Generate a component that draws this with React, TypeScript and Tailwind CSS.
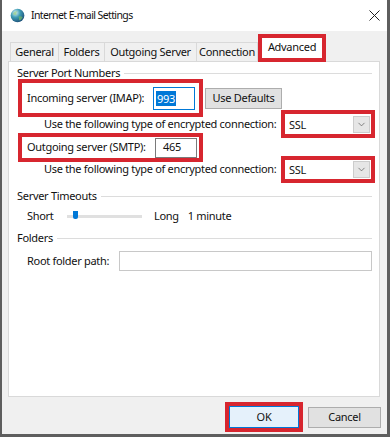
import { ChevronDown } from 'lucide-react'

const font = { fontFamily: '"Noto Sans", "Open Sans", sans-serif' }

function GroupHeader({ title, className }: { title: string; className?: string }) {
	return (
		<div className={`flex items-center h-[14px] pl-[8px] pr-[7px] ${className ?? ''}`}>
			<span className="leading-[14px] whitespace-nowrap">{title}</span>
			<div className="flex-1 h-px bg-[#dcdcdc] ml-[4px]" />
		</div>
	)
}

function SslSelect({ className }: { className?: string }) {
	return (
		<div className={`ml-auto mr-[4px] w-[94px] shrink-0 border-4 border-[#d7262f] ${className ?? ''}`}>
			<div className="flex items-center h-full bg-white pl-[4px] pr-[1px]">
				<span className="flex-1 leading-none">SSL</span>
				<div className="flex items-center justify-center w-[17px] h-[17px] bg-[#e6e6e6] border border-[#cccccc]">
					<ChevronDown className="w-[11px] h-[11px] text-[#555]" strokeWidth={1.5} />
				</div>
			</div>
		</div>
	)
}

function App() {
	return (
		<div
			className="w-[390px] h-[437px] bg-[#5e5e5e] overflow-hidden text-[11px] tracking-[-0.3px] text-[#111]"
			style={font}
		>
			<div className="ml-[2px] mr-[3px] h-[434px] bg-[#f0f0f0] flex flex-col">
				{/* title bar */}
				<div className="flex items-center h-[31px] bg-white">
					<svg className="ml-[8px] w-[15px] h-[15px]" viewBox="0 0 16 16">
						<defs>
							<radialGradient id="globe" cx="0.35" cy="0.3" r="0.75">
								<stop offset="0" stopColor="#d9f0f5" />
								<stop offset="0.45" stopColor="#3f9db5" />
								<stop offset="1" stopColor="#1d4f78" />
							</radialGradient>
						</defs>
						<circle cx="8" cy="8" r="7.3" fill="url(#globe)" />
						<path d="M3 6 Q5 3 8 3.5 Q6 5 7 7 Q5 8 3 6Z" fill="#9ccf8f" opacity="0.8" />
						<path d="M9 9 Q12 8 13.5 10 Q12 13 9.5 13 Q10 11 9 9Z" fill="#6cb26b" opacity="0.8" />
					</svg>
					<span className="ml-[6px] text-[10.5px] tracking-[-0.6px] whitespace-nowrap">Internet E-mail Settings</span>
					<svg className="ml-auto mr-[7px] w-[11px] h-[11px]" viewBox="0 0 11 11">
						<path d="M0.5 0.5 L10.5 10.5 M10.5 0.5 L0.5 10.5" stroke="#222" strokeWidth="1" />
					</svg>
				</div>

				{/* tabs */}
				<div className="flex items-end h-[30px] pl-[8px] whitespace-nowrap">
					<div className="w-[49px] h-[19px] border border-b-0 border-[#d9d9d9] flex items-center justify-center">General</div>
					<div className="w-[46px] h-[19px] border border-b-0 border-l-0 border-[#d9d9d9] flex items-center justify-center">Folders</div>
					<div className="w-[92px] h-[19px] border border-b-0 border-l-0 border-[#d9d9d9] flex items-center justify-center">Outgoing Server</div>
					<div className="w-[61px] h-[19px] border border-b-0 border-l-0 border-[#d9d9d9] flex items-center justify-center">Connection</div>
					<div className="relative z-10 -mb-[1px] w-[68px] h-[28px] border-4 border-[#d7262f] bg-white flex items-center justify-center pb-[1px]">
						Advanced
					</div>
				</div>

				{/* panel */}
				<div className="ml-[6px] w-[372px] h-[336px] border border-[#d9d9d9] bg-white flex flex-col whitespace-nowrap">
					<GroupHeader title="Server Port Numbers" className="mt-[4px]" />

					<div className="flex items-center h-[38px] -mt-[1px]">
						<div className="ml-[9px] w-[185px] h-full border-4 border-[#d7262f] flex items-center pl-[5px]">
							<span>Incoming server (IMAP):</span>
							<div className="ml-auto mr-[4px] w-[42px] h-[23px] border border-[#0078d7] flex items-center pl-[2px]">
								<span className="bg-[#0078d7] text-white px-[1px] leading-[15px]">993</span>
							</div>
						</div>
						<button className="ml-[2px] w-[77px] h-[21px] bg-[#e1e1e1] border border-[#adadad]">Use Defaults</button>
					</div>

					<div className="flex items-center h-[28px] -mt-[7px]">
						<span className="ml-[35px]">Use the following type of encrypted connection:</span>
						<SslSelect className="h-[28px]" />
					</div>

					<div className="flex items-center h-[29px] -mt-[5px]">
						<div className="ml-[9px] w-[185px] h-full border-4 border-[#d7262f] flex items-center pl-[5px]">
							<span>Outgoing server (SMTP):</span>
							<div className="ml-auto mr-[2px] w-[42px] h-[20px] border border-[#7a7a7a] flex items-center pl-[7px]">
								465
							</div>
						</div>
					</div>

					<div className="flex items-center h-[27px] -mt-[6px]">
						<span className="ml-[35px]">Use the following type of encrypted connection:</span>
						<SslSelect className="h-[27px]" />
					</div>

					<GroupHeader title="Server Timeouts" className="mt-[6px]" />

					<div className="flex items-center h-[16px] mt-[5px]">
						<span className="ml-[18px] w-[40px]">Short</span>
						<div className="relative w-[75px] h-[3px] bg-[#e0e0e0]">
							<div className="absolute left-[6px] -top-[4px] w-[5px] h-[8px] bg-[#0078d7] rounded-b-[2px]" />
						</div>
						<span className="ml-[12px]">Long</span>
						<span className="ml-[9px]">1 minute</span>
					</div>

					<GroupHeader title="Folders" className="mt-[7px]" />

					<div className="flex items-center h-[20px] mt-[6px]">
						<span className="ml-[18px]">Root folder path:</span>
						<div className="ml-auto mr-[7px] w-[253px] h-[20px] border border-[#c8c8c8] bg-white" />
					</div>
				</div>

				{/* footer */}
				<div className="flex justify-end items-center h-[30px] mt-[5px] pr-[6px]">
					<div className="w-[78px] h-[30px] border-4 border-[#d7262f]">
						<button className="w-full h-full bg-[#e5f1fb] border border-[#0078d7]">OK</button>
					</div>
					<button className="ml-[5px] w-[73px] h-[21px] bg-[#e1e1e1] border border-[#adadad]">Cancel</button>
				</div>
			</div>
		</div>
	)
}

export default App
